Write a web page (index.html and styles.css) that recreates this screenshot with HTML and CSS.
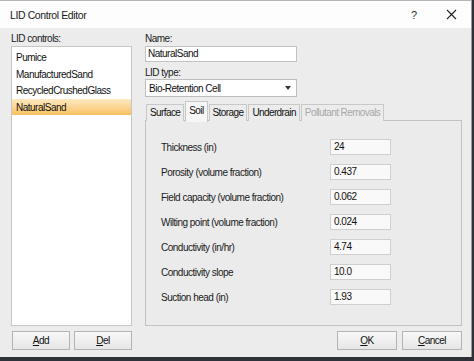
FILE: index.html
```html
<!DOCTYPE html>
<html>
<head>
<meta charset="utf-8">
<link rel="stylesheet" href="styles.css">
</head>
<body>
<div class="window">
  <div class="titlebar">
    <span class="title">LID Control Editor</span>
    <span class="help">?</span>
    <span class="close"><svg width="11" height="11" viewBox="0 0 11 11"><path d="M1 1L10 10M10 1L1 10" stroke="#222" stroke-width="1.1" fill="none"/></svg></span>
  </div>
  <div class="content">
    <div class="leftcol">
      <div class="lbl">LID controls:</div>
      <div class="listbox">
        <div class="item">Pumice</div>
        <div class="item">ManufacturedSand</div>
        <div class="item">RecycledCrushedGlass</div>
        <div class="item selected">NaturalSand</div>
      </div>
    </div>
    <div class="rightcol">
      <div class="lbl">Name:</div>
      <div class="textbox">NaturalSand</div>
      <div class="lbl lbl-type">LID type:</div>
      <div class="combo"><span>Bio-Retention Cell</span><span class="arrow"></span></div>
      <div class="tabs">
        <div class="tab">Surface</div>
        <div class="tab active">Soil</div>
        <div class="tab">Storage</div>
        <div class="tab">Underdrain</div>
        <div class="tab disabled">Pollutant Removals</div>
      </div>
      <div class="panel">
        <div class="row"><span>Thickness (in)</span><div class="field">24</div></div>
        <div class="row"><span>Porosity (volume fraction)</span><div class="field">0.437</div></div>
        <div class="row"><span>Field capacity (volume fraction)</span><div class="field">0.062</div></div>
        <div class="row"><span>Wilting point (volume fraction)</span><div class="field">0.024</div></div>
        <div class="row"><span>Conductivity (in/hr)</span><div class="field">4.74</div></div>
        <div class="row"><span>Conductivity slope</span><div class="field">10.0</div></div>
        <div class="row"><span>Suction head (in)</span><div class="field">1.93</div></div>
      </div>
    </div>
    <div class="btnrow left">
      <div class="btn"><u>A</u>dd</div>
      <div class="btn"><u>D</u>el</div>
    </div>
    <div class="btnrow right">
      <div class="btn"><u>O</u>K</div>
      <div class="btn"><u>C</u>ancel</div>
    </div>
  </div>
</div>
</body>
</html>
```

FILE: styles.css
```css
html, body {
  margin: 0;
  padding: 0;
}
body {
  width: 474px;
  height: 361px;
  background: #2e3238;
  font-family: "Liberation Sans", Arial, sans-serif;
  font-size: 10px;
  letter-spacing: -0.5px;
  color: #111;
  overflow: hidden;
}
.window {
  width: 471px;
  height: 356px;
  border-top: 1px solid #b8b8b8;
  border-right: 1px solid #9a9a9a;
  background: #ececec;
  display: flex;
  flex-direction: column;
}
.titlebar {
  height: 27px;
  background: #fdfdfd;
  display: flex;
  align-items: center;
  flex-shrink: 0;
}
.title {
  padding-left: 10px;
  font-size: 10.5px;
  letter-spacing: -0.4px;
  color: #1a1a1a;
  flex: 1;
}
.help {
  font-size: 11px;
  color: #333;
  width: 10px;
  margin-right: 25px;
}
.close {
  width: 11px;
  height: 11px;
  margin-right: 14px;
  display: flex;
}
.content {
  flex: 1;
  display: grid;
  grid-template-columns: 121px 317px;
  grid-template-rows: 294px 19px;
  column-gap: 13px;
  row-gap: 5px;
  padding: 4px 10px 7px 11px;
}
.leftcol, .rightcol {
  display: flex;
  flex-direction: column;
}
.lbl {
  height: 14px;
  line-height: 13px;
  color: #1a1a1a;
}
.lbl-type {
  height: 13px;
  margin-top: 4px;
}
.listbox {
  flex: 1;
  background: #fff;
  border: 1px solid #c6c6c6;
  padding-top: 2px;
}
.item {
  height: 16.5px;
  line-height: 17px;
  padding-left: 4px;
  color: #111;
}
.item.selected {
  background: linear-gradient(#fde8c0, #fad28c 60%, #f7bf5c);
}
.textbox {
  height: 16px;
  width: 152px;
  box-sizing: border-box;
  background: #fff;
  border: 1px solid #c2c2c2;
  padding-left: 2px;
  line-height: 13px;
}
.combo {
  height: 18px;
  width: 152px;
  box-sizing: border-box;
  background: #fff;
  border: 1px solid #bdbdbd;
  display: flex;
  align-items: center;
  justify-content: space-between;
  padding: 0 5px 0 3px;
}
.arrow {
  width: 0;
  height: 0;
  border-left: 3.5px solid transparent;
  border-right: 3.5px solid transparent;
  border-top: 4px solid #333;
}
.tabs {
  margin-top: 4px;
  height: 20px;
  display: flex;
  align-items: flex-end;
  padding-left: 1px;
  position: relative;
  z-index: 1;
}
.tab {
  height: 17px;
  box-sizing: border-box;
  border: 1px solid #c8c8c8;
  border-bottom: none;
  background: #ececec;
  padding: 0 3px;
  letter-spacing: -0.6px;
  line-height: 16px;
  margin-right: 1px;
  color: #111;
}
.tab.active {
  height: 21px;
  background: #f6f6f6;
  margin-bottom: -1px;
  padding-top: 1px;
  line-height: 16px;
  align-self: flex-end;
}
.tab.disabled {
  color: #a8a8a8;
}
.panel {
  flex: 1;
  border: 1px solid #c2c2c2;
  background: #ebebeb;
  margin-top: -1px;
  padding: 18px 0 0 15px;
  display: flex;
  flex-direction: column;
  gap: 9px;
}
.row {
  display: flex;
  align-items: center;
  height: 16px;
}
.row span {
  width: 169px;
  color: #1a1a1a;
}
.field {
  width: 61px;
  height: 16px;
  box-sizing: border-box;
  background: #f9f9f9;
  border: 1px solid #cfcfcf;
  padding-left: 3px;
  line-height: 14px;
}
.btnrow {
  display: flex;
  gap: 4px;
}
.btnrow.left {
  padding-left: 1px;
}
.btnrow.right {
  justify-content: flex-end;
  gap: 5px;
}
.btn {
  width: 58px;
  height: 19px;
  box-sizing: border-box;
  border: 1px solid #b4b4b4;
  background: linear-gradient(#f8f8f8, #e6e6e6);
  text-align: center;
  line-height: 17px;
  color: #111;
}
.btnrow.right .btn {
  width: 60px;
}
```
